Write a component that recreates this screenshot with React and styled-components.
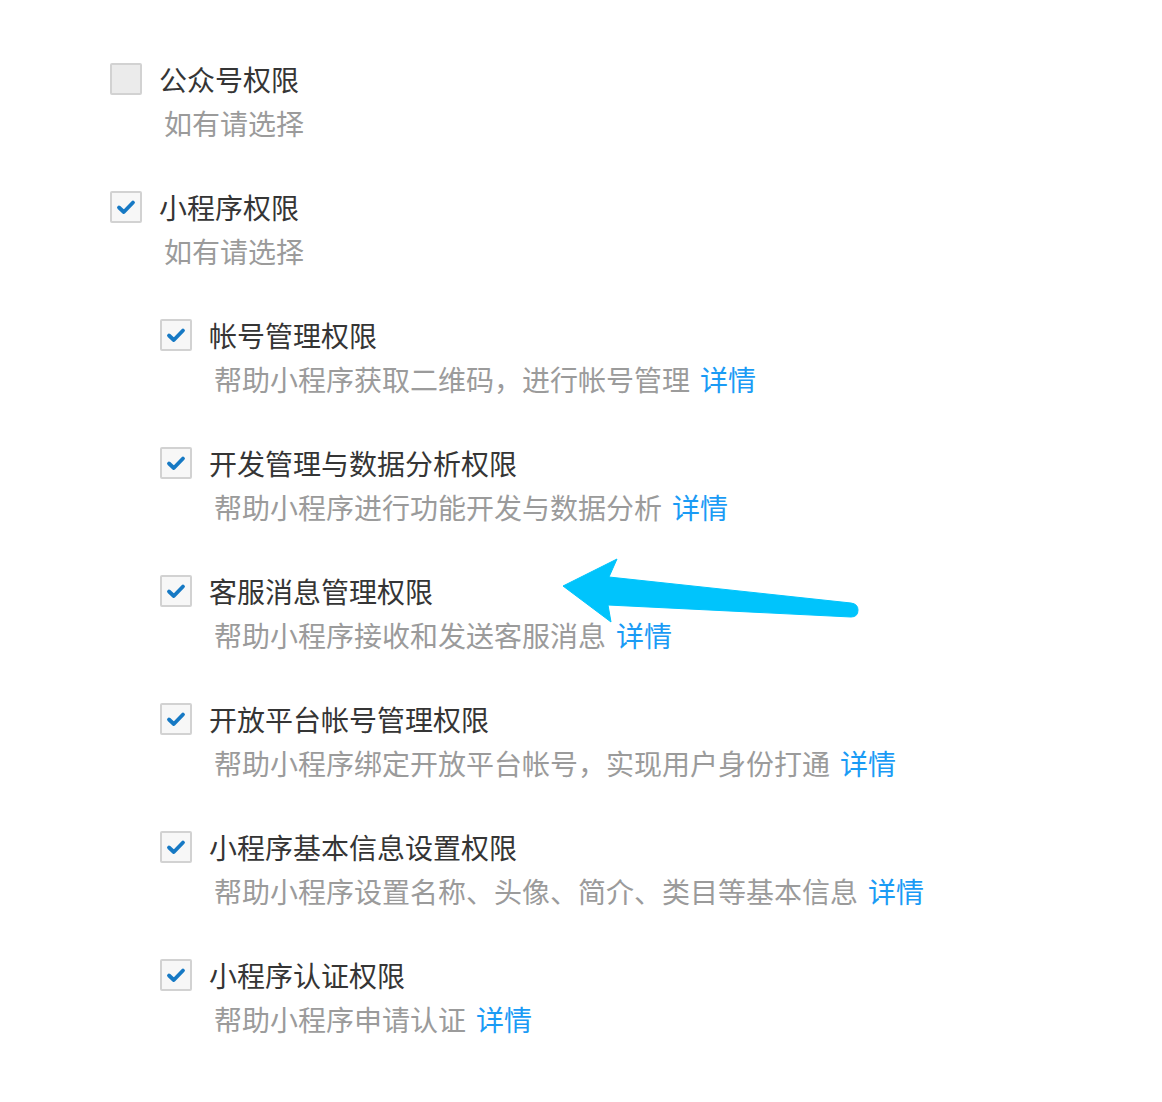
import React from "react";
import styled, { createGlobalStyle } from "styled-components";

const GlobalStyle = createGlobalStyle`
  html, body {
    margin: 0;
    padding: 0;
    background: #ffffff;
  }
  body {
    font-family: "Noto Sans CJK SC", "Noto Sans", sans-serif;
  }
`;

const permissions = [
  { title: "公众号权限", desc: "如有请选择", checked: false, level: 0 },
  { title: "小程序权限", desc: "如有请选择", checked: true, level: 0 },
  {
    title: "帐号管理权限",
    desc: "帮助小程序获取二维码，进行帐号管理",
    checked: true,
    level: 1,
    link: true,
  },
  {
    title: "开发管理与数据分析权限",
    desc: "帮助小程序进行功能开发与数据分析",
    checked: true,
    level: 1,
    link: true,
  },
  {
    title: "客服消息管理权限",
    desc: "帮助小程序接收和发送客服消息",
    checked: true,
    level: 1,
    link: true,
  },
  {
    title: "开放平台帐号管理权限",
    desc: "帮助小程序绑定开放平台帐号，实现用户身份打通",
    checked: true,
    level: 1,
    link: true,
  },
  {
    title: "小程序基本信息设置权限",
    desc: "帮助小程序设置名称、头像、简介、类目等基本信息",
    checked: true,
    level: 1,
    link: true,
  },
  {
    title: "小程序认证权限",
    desc: "帮助小程序申请认证",
    checked: true,
    level: 1,
    link: true,
  },
];

const Check = ({ checked }) => (
  <CheckBox $checked={checked}>
    {checked && (
      <svg width="22" height="22" viewBox="0 0 22 22">
        <path
          d="M4 11.5 L8.8 16 L18 6.5"
          fill="none"
          stroke="#1679c4"
          strokeWidth="3.8"
          strokeLinecap="round"
          strokeLinejoin="round"
        />
      </svg>
    )}
  </CheckBox>
);

const Arrow = () => (
  <ArrowLayer width="1162" height="1102" viewBox="0 0 1162 1102">
    <path
      d="M563 586 L617 559 L609 577 L851 603 Q858 604 858 610 Q858 617 851 617 L608 605 L611 622 Z"
      fill="#00c4fc"
      stroke="#00c4fc"
      strokeWidth="1"
      strokeLinejoin="round"
    />
  </ArrowLayer>
);

const App = () => {
  return (
    <Page>
      <GlobalStyle />
      <List>
        {permissions.map((item) => (
          <Item key={item.title} $level={item.level}>
            <Row>
              <Check checked={item.checked} />
              <Title>{item.title}</Title>
            </Row>
            <Desc>
              {item.desc}
              {item.link && <Detail href="#">详情</Detail>}
            </Desc>
          </Item>
        ))}
      </List>
      <Arrow />
    </Page>
  );
};

const Page = styled.div`
  position: relative;
  width: 1162px;
  height: 1102px;
  background: #fff;
  overflow: hidden;
`;

const List = styled.ul`
  list-style: none;
  margin: 0;
  padding: 57px 0 0 110px;
`;

const Item = styled.li`
  margin: 0 0 40px ${(p) => p.$level * 50}px;
`;

const Row = styled.div`
  display: flex;
  align-items: center;
  gap: 17px;
  height: 44px;
`;

const CheckBox = styled.span`
  box-sizing: border-box;
  display: flex;
  align-items: center;
  justify-content: center;
  width: 32px;
  height: 32px;
  border: 2px solid #d2d2d2;
  border-radius: 2px;
  background: ${(p) => (p.$checked ? "#f7f7f7" : "#ebebeb")};
`;

const Title = styled.span`
  font-size: 28px;
  line-height: 44px;
  color: #353535;
`;

const Desc = styled.div`
  padding-left: 54px;
  font-size: 28px;
  line-height: 44px;
  color: #9b9b9b;
  white-space: nowrap;
`;

const Detail = styled.a`
  margin-left: 10px;
  color: #1a9bf5;
  text-decoration: none;
`;

const ArrowLayer = styled.svg`
  position: absolute;
  left: 0;
  top: 0;
  pointer-events: none;
`;

export default App;
